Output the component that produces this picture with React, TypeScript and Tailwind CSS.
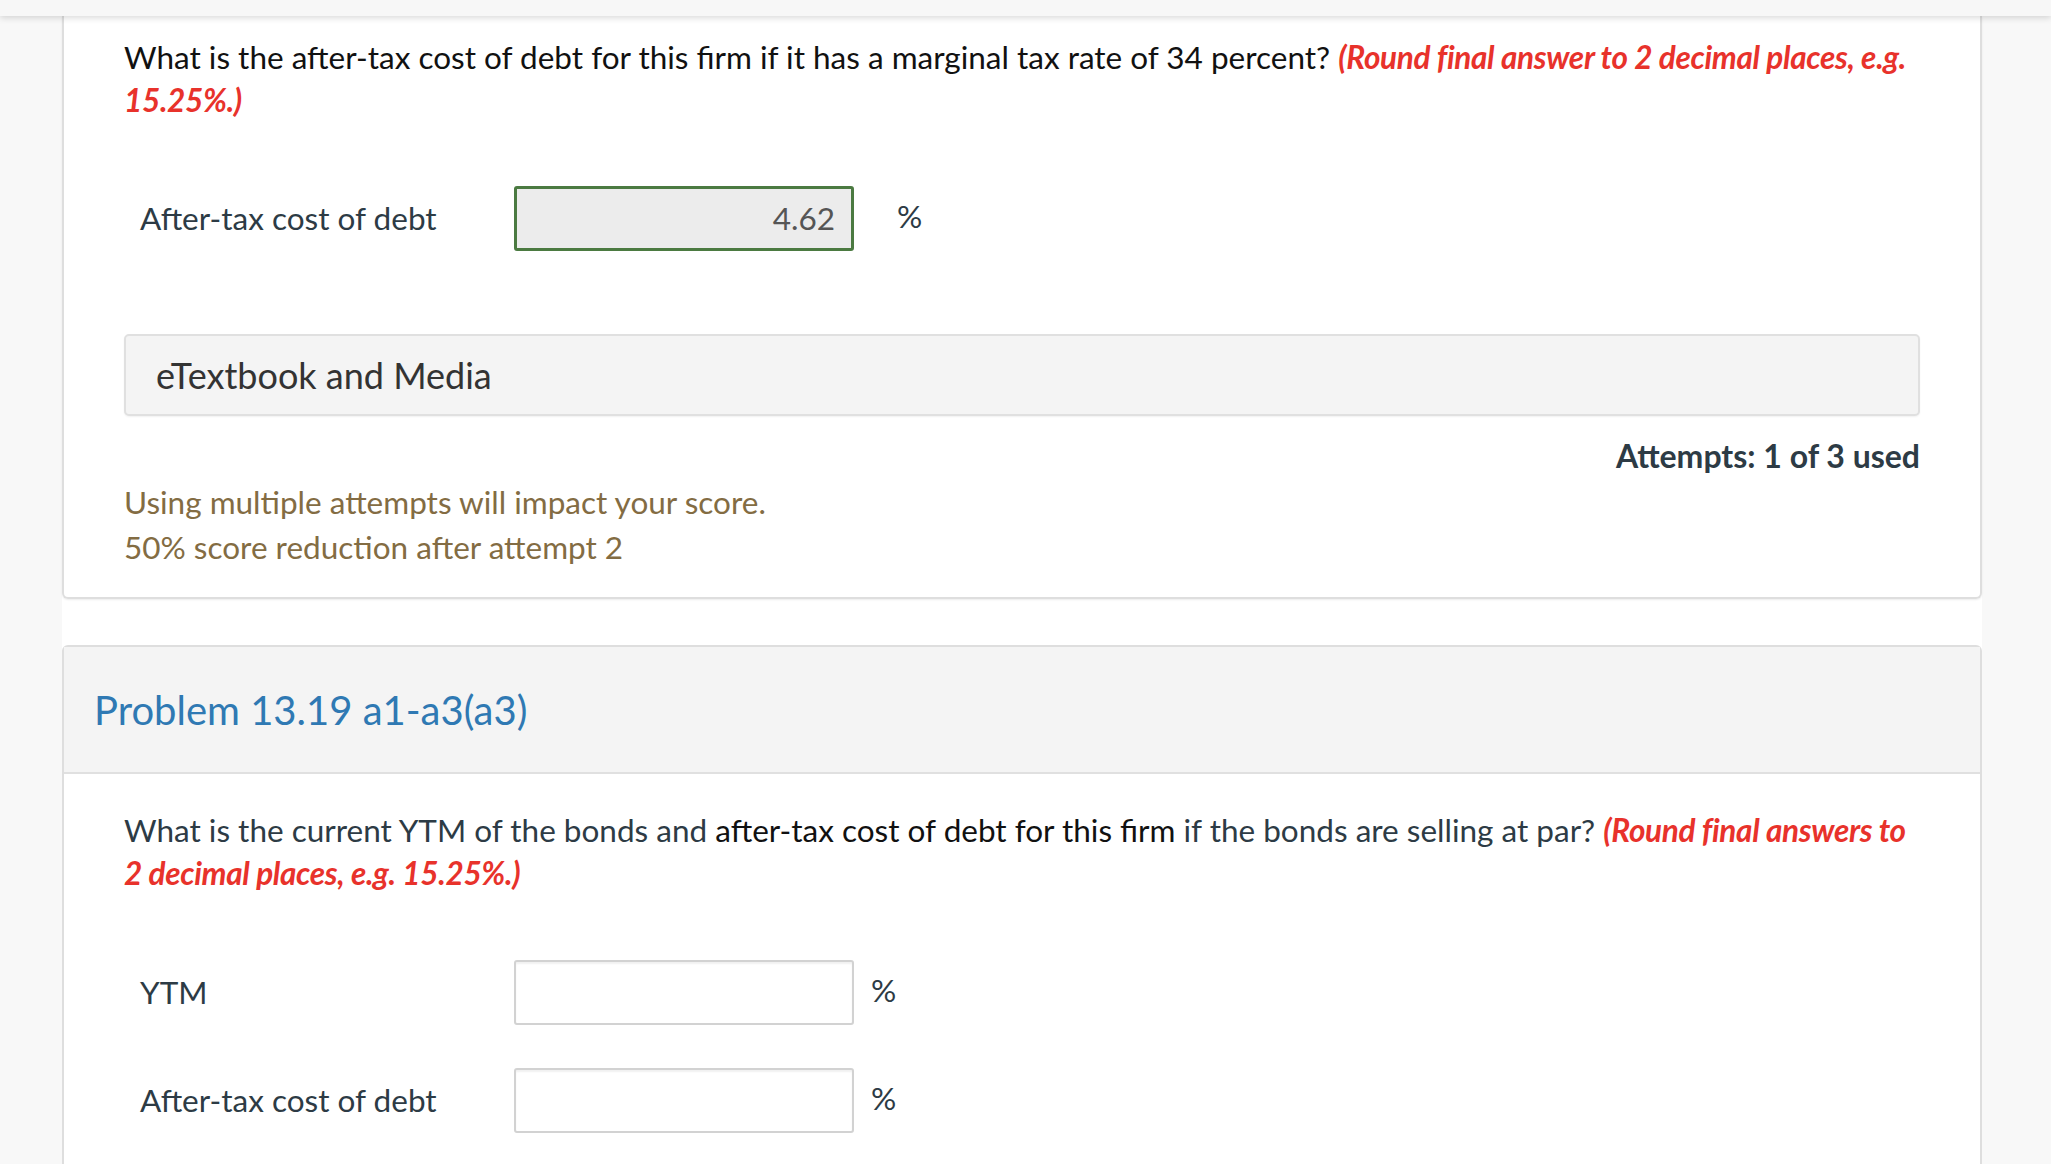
import React from "react";

interface AnswerRowProps {
  label: string;
  value?: string;
  graded?: boolean;
  pctGap?: string;
}

const AnswerRow: React.FC<AnswerRowProps> = ({ label, value, graded, pctGap = "ml-[17px]" }) => {
  return (
    <div className="flex items-center pl-4">
      <div className="w-[374px] text-[31.5px] text-[#2d3b45]">{label}</div>
      <div
        className={
          graded
            ? "w-[340px] h-[65px] rounded-[3px] border-[3px] border-[#4b7a41] bg-[#ececec] flex items-center justify-end px-4 text-[31.5px] text-[#555]"
            : "w-[340px] h-[65px] rounded-[3px] border-2 border-[#d2d2d2] bg-white shadow-[inset_0_2px_2px_rgba(0,0,0,0.06)]"
        }
      >
        {value}
      </div>
      <span className={`${pctGap} text-[31.5px] text-[#2d3b45] -translate-y-[2px]`}>%</span>
    </div>
  );
};

const Hint = ({ children }: { children: React.ReactNode }) => (
  <span className="font-bold italic text-[#e8322b] tracking-[-0.01em]">{children}</span>
);

const App = () => {
  return (
    <div className="min-h-[1164px] bg-[#f8f8f8] font-['Lato','Open_Sans',sans-serif] overflow-hidden">
      <div className="relative z-10 h-4 bg-[#f7f7f7] shadow-[0_2px_6px_rgba(0,0,0,0.15)]" />

      <div className="flex">
        <div className="w-[62px] shrink-0" />

        <main className="w-[1920px] shrink-0 bg-white pb-10">
          {/* graded part of the previous problem */}
          <section className="rounded-b-[6px] border-2 border-t-0 border-[#dedede] shadow-[0_1px_2px_rgba(0,0,0,0.08)] px-[60px] pt-5 pb-[28px]">
            <p className="text-[31.5px] leading-[43px] text-[#111]">
              What is the after-tax cost of debt for this firm if it has a marginal tax rate of 34 percent?{" "}
              <Hint>(Round final answer to 2 decimal places, e.g. 15.25%.)</Hint>
            </p>

            <div className="mt-[64px]">
              <AnswerRow label="After-tax cost of debt" value="4.62" graded pctGap="ml-[43px]" />
            </div>

            <div className="mt-[83px] h-[82px] rounded-[5px] border-2 border-[#e0e0e0] bg-[#f4f4f4] shadow-[0_1px_2px_rgba(0,0,0,0.06)] flex items-center px-[30px] text-[36px] text-[#333]">
              eTextbook and Media
            </div>

            <div className="mt-5 text-right text-[32px] leading-[40px] font-bold text-[#2d3b45]">
              Attempts: 1 of 3 used
            </div>
            <div className="mt-1 text-[31.5px] leading-[44.5px] text-[#836c43]">
              <div>Using multiple attempts will impact your score.</div>
              <div>50% score reduction after attempt 2</div>
            </div>
          </section>

          {/* next problem */}
          <section className="mt-[46px] rounded-t-[6px] border-2 border-[#dedede]">
            <header className="h-[127px] bg-[#f4f4f4] border-b-2 border-[#e0e0e0] flex items-center px-[30px]">
              <h2 className="text-[40px] text-[#2f79b3]">Problem 13.19 a1-a3(a3)</h2>
            </header>

            <div className="px-[60px] pt-[35px] pb-24">
              <p className="text-[31.5px] leading-[43px] text-[#2d3b45]">
                What is the current YTM of the bonds and{" "}
                <span className="text-[#111]">after-tax cost of debt for this firm</span> if the bonds are
                selling at par? <Hint>(Round final answers to 2 decimal places, e.g. 15.25%.)</Hint>
              </p>

              <div className="mt-[65px] flex flex-col gap-[43px]">
                <AnswerRow label="YTM" />
                <AnswerRow label="After-tax cost of debt" />
              </div>
            </div>
          </section>
        </main>
      </div>
    </div>
  );
};

export default App;
